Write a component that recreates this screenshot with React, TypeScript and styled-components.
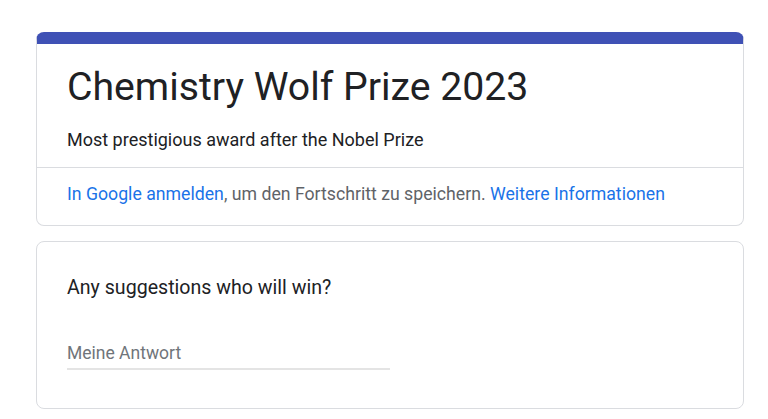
import styled, { createGlobalStyle } from 'styled-components'

const GlobalStyle = createGlobalStyle`
  body {
    margin: 0;
    background: #fff;
    font-family: Roboto, 'Liberation Sans', Arial, sans-serif;
    color: #202124;
  }
`

const Page = styled.div`
  display: flex;
  flex-direction: column;
  gap: 15px;
  width: 708px;
  padding: 32px 0 0 36px;
`

const Card = styled.section<{ accent?: boolean }>`
  box-sizing: border-box;
  background: #fff;
  border: 1px solid #dadce0;
  border-radius: 8px;
  overflow: hidden;
  ${(p) => (p.accent ? 'border-top: 12px solid #3f51b5;' : '')}
`

const Header = styled.div`
  padding: 19px 30px 15px;
`

const Title = styled.h1`
  margin: 0;
  font-size: 39.2px;
  font-weight: 400;
  line-height: 48px;
  color: #202124;
`

const Description = styled.div`
  margin-top: 17px;
  font-size: 18px;
  line-height: 24px;
  color: #202124;
`

const Notice = styled.div`
  border-top: 1px solid #dadce0;
  padding: 14px 30px 19px;
  font-size: 17.7px;
  line-height: 24px;
  color: #5f6368;
`

const Link = styled.a`
  color: #1a73e8;
  text-decoration: none;
`

const Question = styled.div`
  padding: 33px 30px 38px;
`

const QuestionTitle = styled.div`
  font-size: 19.6px;
  line-height: 26px;
  color: #202124;
`

const Answer = styled.div`
  margin-top: 41px;
  width: 323px;
  padding-bottom: 4px;
  border-bottom: 2px solid #e4e4e4;
  font-size: 17.5px;
  line-height: 22px;
  color: #70757a;
`

export default function App() {
  return (
    <>
      <GlobalStyle />
      <Page>
        <Card accent>
          <Header>
            <Title>Chemistry Wolf Prize 2023</Title>
            <Description>Most prestigious award after the Nobel Prize</Description>
          </Header>
          <Notice>
            <Link href="#">In Google anmelden</Link>, um den Fortschritt zu speichern.{' '}
            <Link href="#">Weitere Informationen</Link>
          </Notice>
        </Card>
        <Card>
          <Question>
            <QuestionTitle>Any suggestions who will win?</QuestionTitle>
            <Answer>Meine Antwort</Answer>
          </Question>
        </Card>
      </Page>
    </>
  )
}
